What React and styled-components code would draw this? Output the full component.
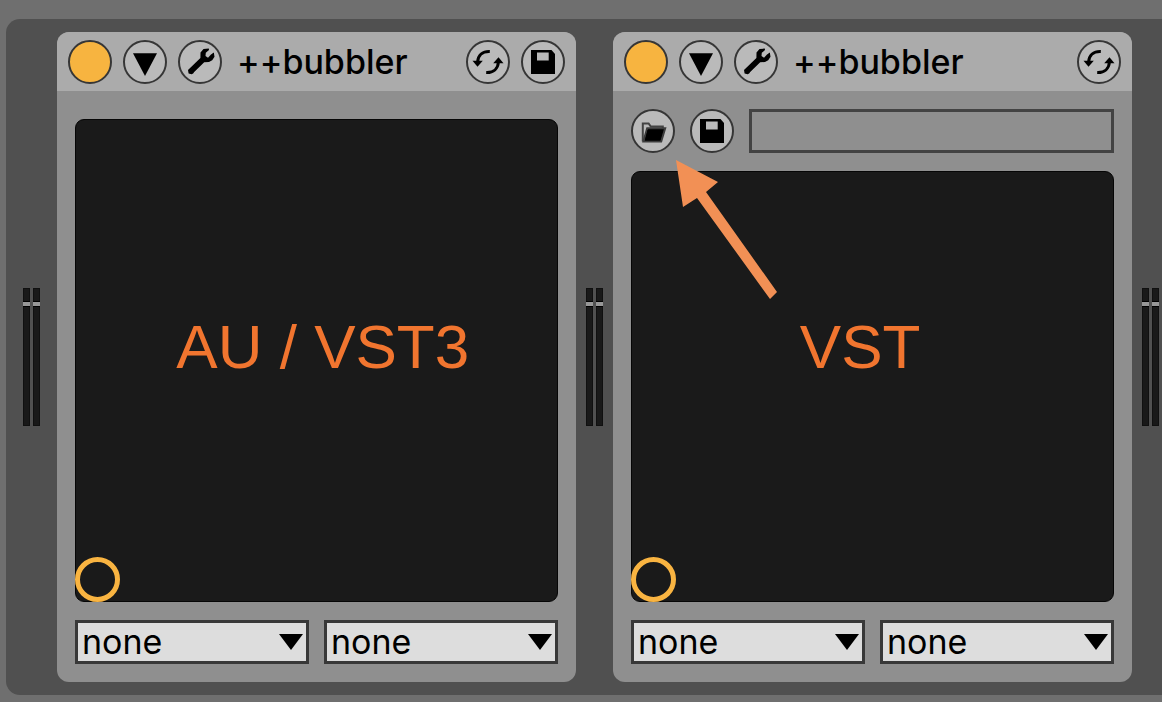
import React from "react";
import styled, { createGlobalStyle } from "styled-components";

const GlobalStyle = createGlobalStyle`
  *, *::before, *::after { box-sizing: border-box; }
  body {
    margin: 0;
    background: #6f6f6f;
    color: #000;
    font-family: Inter, "Liberation Sans", sans-serif;
  }
  button, input, select { font: inherit; color: inherit; margin: 0; }
`;

const Page = styled.main`
  padding: 19px 0 7px 6px;
`;

const Rack = styled.div`
  display: flex;
  align-items: stretch;
  padding: 13px 3px 13px 17px;
  border-radius: 14px 0 0 14px;
  background: #505050;
`;

const MeterFrame = styled.div`
  flex: none;
  align-self: center;
  display: flex;
  gap: 3px;
  margin: ${(p) => (p.$first ? "0 17px 0 0" : "0 10px")};
  &:last-child { margin-right: 0; }
`;

const MeterBar = styled.div`
  width: 7px;
  height: 138px;
  padding-top: 12px;
  background: #191919;
  border: 1px solid #101010;
`;

const MeterLevel = styled.div`
  height: 6px;
  margin: 0 -1px;
  background: #979797;
  border: solid #000;
  border-width: 1px 0;
`;

const DeviceFrame = styled.section`
  position: relative;
  flex: 1 1 0;
  min-width: 0;
  display: flex;
  flex-direction: column;
  border-radius: 12px;
  overflow: hidden;
  background: #8f8f8f;
`;

const Header = styled.header`
  display: flex;
  align-items: center;
  gap: 11px;
  height: 59px;
  padding: 0 11px;
  background: #ababab;
`;

const Title = styled.h2`
  flex: 1;
  min-width: 0;
  margin: 0 0 0 4px;
  font-size: 34px;
  font-weight: 500;
  line-height: 40px;
  white-space: nowrap;
`;

const RoundButton = styled.button`
  flex: none;
  width: 44px;
  height: 44px;
  padding: 0;
  border: 2px solid #363636;
  border-radius: 50%;
  background: ${(p) => (p.$on ? "#f7b440" : "#bababa")};
  svg { display: block; margin: -2px; }
`;

const Body = styled.div`
  flex: 1;
  display: flex;
  flex-direction: column;
  gap: 18px;
  padding: ${(p) => (p.$toolbar ? "18px" : "28px")} 18px 18px;
`;

const Toolbar = styled.div`
  display: flex;
  gap: 15px;
`;

const NameInput = styled.input`
  flex: 1;
  min-width: 0;
  height: 44px;
  padding: 0 6px;
  border: 3px solid #434343;
  border-radius: 0;
  background: #8f8f8f;
  font-size: 24px;
`;

const Screen = styled.div`
  display: flex;
  align-items: flex-end;
  ${(p) => (p.$square ? "aspect-ratio: 1;" : "flex: 1;")}
  border: 1px solid #060606;
  border-radius: 9px;
  background: #1a1a1a;
`;

const Puck = styled.div`
  width: 45px;
  height: 45px;
  margin: -1px;
  border: 5px solid #f9b441;
  border-radius: 50%;
`;

const Menus = styled.div`
  display: grid;
  grid-template-columns: 1fr 1fr;
  gap: 15px;
`;

const MenuFrame = styled.div`
  position: relative;
  svg {
    position: absolute;
    top: 14px;
    right: 6px;
    pointer-events: none;
  }
`;

const MenuSelect = styled.select`
  appearance: none;
  display: block;
  width: 100%;
  height: 44px;
  padding: 0 32px 0 4px;
  border: 3px solid #383838;
  border-radius: 0;
  background: #dddddd;
  font-size: 34px;
  line-height: 38px;
`;

const Caption = styled.p`
  position: absolute;
  top: 279px;
  left: ${(p) => p.$left};
  margin: 0;
  color: #f1752f;
  font-family: "Liberation Sans", Arial, sans-serif;
  font-size: 62px;
  line-height: 72px;
  white-space: nowrap;
`;

const Pointer = styled.svg`
  position: absolute;
  top: 128px;
  left: 63px;
`;

const Icon = ({ children }) => (
  <svg width="44" height="44" viewBox="0 0 44 44" aria-hidden="true">
    {children}
  </svg>
);

const TriangleIcon = () => (
  <Icon><path d="M10 13.3H34L22 36Z" /></Icon>
);

const WrenchIcon = () => (
  <Icon>
    <path d="M22.5 12.4L25.5 9L30.8 8.6L31 10L27.8 12.8L27.5 16L30 17.8L33 14.5L35.8 12.5L36.5 16.7L34.2 20.2L31 22L26.2 22.2L16.2 32Q15.4 34 13.6 34.2L10.6 33.6L10 30L22.4 18Z" />
  </Icon>
);

const SwapIcon = () => (
  <Icon>
    <path d="M23.8 11.5C16.5 11.2 12 15.5 11.6 22" fill="none" stroke="#000" strokeWidth="3" />
    <path d="M6.5 20.8H16.8L11.5 26.8Z" />
    <path d="M20.2 32.5C27.5 32.8 32 28.5 32.4 22" fill="none" stroke="#000" strokeWidth="3" />
    <path d="M37.5 23.2H27.2L32.5 17.2Z" />
  </Icon>
);

const SaveIcon = () => (
  <Icon>
    <path fillRule="evenodd" d="M10 10H30.5L34 14V34H10ZM16 12.5V20.5H27.7V12.5Z" />
  </Icon>
);

const FolderIcon = () => (
  <Icon>
    <path d="M11.8 32.5V14.5H17.6L19.8 17.6H31.8V21" fill="none" stroke="#444" strokeWidth="2" />
    <path d="M16.2 19.2H34.2L30.2 32.6H12.4Z" stroke="#3c3c3c" strokeWidth="2" />
    <path d="M16.5 21H31.8L29.2 31.4H14Z" />
  </Icon>
);

function Meter({ first }) {
  return (
    <MeterFrame $first={first} role="img" aria-label="Level">
      <MeterBar><MeterLevel /></MeterBar>
      <MeterBar><MeterLevel /></MeterBar>
    </MeterFrame>
  );
}

function Menu({ label }) {
  return (
    <MenuFrame>
      <MenuSelect aria-label={label} defaultValue="none">
        <option value="none">none</option>
      </MenuSelect>
      <svg width="24" height="16" viewBox="0 0 24 16" aria-hidden="true">
        <path d="M0 0H24L12 16Z" />
      </svg>
    </MenuFrame>
  );
}

function Device({ name, toolbar, caption, captionLeft, children }) {
  return (
    <DeviceFrame aria-label={`${name} ${caption}`}>
      <Header>
        <RoundButton type="button" $on aria-label="Device on" aria-pressed="true" />
        <RoundButton type="button" aria-label="Unfold"><TriangleIcon /></RoundButton>
        <RoundButton type="button" aria-label="Configure"><WrenchIcon /></RoundButton>
        <Title>{name}</Title>
        <RoundButton type="button" aria-label="Hot-swap"><SwapIcon /></RoundButton>
        {!toolbar && (
          <RoundButton type="button" aria-label="Save preset"><SaveIcon /></RoundButton>
        )}
      </Header>
      <Body $toolbar={toolbar}>
        {toolbar && (
          <Toolbar>
            <RoundButton type="button" aria-label="Open preset"><FolderIcon /></RoundButton>
            <RoundButton type="button" aria-label="Save preset"><SaveIcon /></RoundButton>
            <NameInput type="text" aria-label="Preset name" />
          </Toolbar>
        )}
        <Screen $square={!toolbar}><Puck /></Screen>
        <Menus>
          <Menu label="Horizontal parameter" />
          <Menu label="Vertical parameter" />
        </Menus>
      </Body>
      <Caption $left={captionLeft}>{caption}</Caption>
      {children}
    </DeviceFrame>
  );
}

export default function App() {
  return (
    <>
      <GlobalStyle />
      <Page>
        <Rack>
          <Meter first />
          <Device name="++bubbler" caption="AU / VST3" captionLeft="23%" />
          <Meter />
          <Device name="++bubbler" caption="VST" captionLeft="36%" toolbar>
            <Pointer width="102" height="142" viewBox="0 0 102 142" aria-hidden="true">
              <path d="M0 0L42 22L30 32L101 132L94 139L21 38L7 47Z" fill="#f29055" />
            </Pointer>
          </Device>
          <Meter />
        </Rack>
      </Page>
    </>
  );
}
